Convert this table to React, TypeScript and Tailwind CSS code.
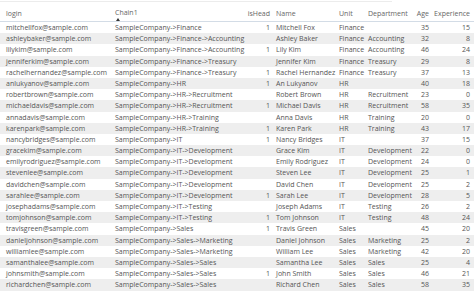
import React from "react";

type Row = [string, string, string, string, string, string, number, number];

const rows: Row[] = [
  ["mitchellfox@sample.com", "SampleCompany->Finance", "1", "Mitchell Fox", "Finance", "", 35, 15],
  ["ashleybaker@sample.com", "SampleCompany->Finance->Accounting", "", "Ashley Baker", "Finance", "Accounting", 32, 8],
  ["lilykim@sample.com", "SampleCompany->Finance->Accounting", "1", "Lily Kim", "Finance", "Accounting", 46, 24],
  ["jenniferkim@sample.com", "SampleCompany->Finance->Treasury", "", "Jennifer Kim", "Finance", "Treasury", 29, 8],
  ["rachelhernandez@sample.com", "SampleCompany->Finance->Treasury", "1", "Rachel Hernandez", "Finance", "Treasury", 37, 13],
  ["anlukyanov@sample.com", "SampleCompany->HR", "1", "An Lukyanov", "HR", "", 40, 18],
  ["robertbrown@sample.com", "SampleCompany->HR->Recruitment", "", "Robert Brown", "HR", "Recruitment", 23, 0],
  ["michaeldavis@sample.com", "SampleCompany->HR->Recruitment", "1", "Michael Davis", "HR", "Recruitment", 58, 35],
  ["annadavis@sample.com", "SampleCompany->HR->Training", "", "Anna Davis", "HR", "Training", 20, 0],
  ["karenpark@sample.com", "SampleCompany->HR->Training", "1", "Karen Park", "HR", "Training", 43, 17],
  ["nancybridges@sample.com", "SampleCompany->IT", "1", "Nancy Bridges", "IT", "", 37, 15],
  ["gracekim@sample.com", "SampleCompany->IT->Development", "", "Grace Kim", "IT", "Development", 22, 0],
  ["emilyrodriguez@sample.com", "SampleCompany->IT->Development", "", "Emily Rodriguez", "IT", "Development", 24, 0],
  ["stevenlee@sample.com", "SampleCompany->IT->Development", "", "Steven Lee", "IT", "Development", 25, 1],
  ["davidchen@sample.com", "SampleCompany->IT->Development", "", "David Chen", "IT", "Development", 25, 2],
  ["sarahlee@sample.com", "SampleCompany->IT->Development", "1", "Sarah Lee", "IT", "Development", 28, 5],
  ["josephadams@sample.com", "SampleCompany->IT->Testing", "", "Joseph Adams", "IT", "Testing", 26, 2],
  ["tomjohnson@sample.com", "SampleCompany->IT->Testing", "1", "Tom Johnson", "IT", "Testing", 48, 24],
  ["travisgreen@sample.com", "SampleCompany->Sales", "1", "Travis Green", "Sales", "", 45, 20],
  ["danieljohnson@sample.com", "SampleCompany->Sales->Marketing", "", "Daniel Johnson", "Sales", "Marketing", 25, 2],
  ["williamlee@sample.com", "SampleCompany->Sales->Marketing", "", "William Lee", "Sales", "Marketing", 42, 20],
  ["samanthalee@sample.com", "SampleCompany->Sales->Sales", "", "Samantha Lee", "Sales", "Sales", 25, 4],
  ["johnsmith@sample.com", "SampleCompany->Sales->Sales", "1", "John Smith", "Sales", "Sales", 46, 21],
  ["richardchen@sample.com", "SampleCompany->Sales->Sales", "", "Richard Chen", "Sales", "Sales", 58, 35],
];

// column widths taken from the screenshot
const cols = "grid grid-cols-[113px_134px_25px_64px_29px_40px_26px_43px]";

export default function App() {
  return (
    <div className="w-[474px] h-[292px] overflow-hidden bg-white text-[#555555] text-[7px] font-['Open_Sans',sans-serif]">
      <div className="w-[392px] h-px bg-[#ececec] mt-px" />
      {/* header */}
      <div className={`${cols} h-[20px] border-b border-[#d3dce6] text-[#666666] whitespace-nowrap`}>
        <div className="pl-[6px] pt-[7px]">login</div>
        <div className="pl-[2px] pt-[6px] relative">
          Chain1
          <svg className="absolute left-[3px] top-[16px]" width="4" height="3" viewBox="0 0 4 3">
            <path d="M2 0 L4 3 L0 3 Z" fill="#333" />
          </svg>
        </div>
        <div className="pr-[2px] pt-[7px] text-right">isHead</div>
        <div className="pl-[4px] pt-[7px]">Name</div>
        <div className="pl-[3px] pt-[7px]">Unit</div>
        <div className="pl-[3px] pt-[7px]">Department</div>
        <div className="pr-[2px] pt-[7px] text-right">Age</div>
        <div className="pr-[4px] pt-[7px] text-right">Experience</div>
      </div>
      {/* body */}
      {rows.map((r, i) => (
        <div
          key={r[0]}
          className={`${cols} h-[11.2px] leading-[11.2px] whitespace-nowrap ${i % 2 === 1 ? "bg-[#eeeeee]" : "bg-white"}`}
        >
          <div className="pl-[6px] overflow-hidden">{r[0]}</div>
          <div className="pl-[2px] overflow-hidden">{r[1]}</div>
          <div className="pr-[2px] text-right">{r[2]}</div>
          <div className="pl-[4px]">{r[3]}</div>
          <div className="pl-[3px]">{r[4]}</div>
          <div className="pl-[3px]">{r[5]}</div>
          <div className="pr-[2px] text-right">{r[6]}</div>
          <div className="pr-[4px] text-right">{r[7]}</div>
        </div>
      ))}
    </div>
  );
}
